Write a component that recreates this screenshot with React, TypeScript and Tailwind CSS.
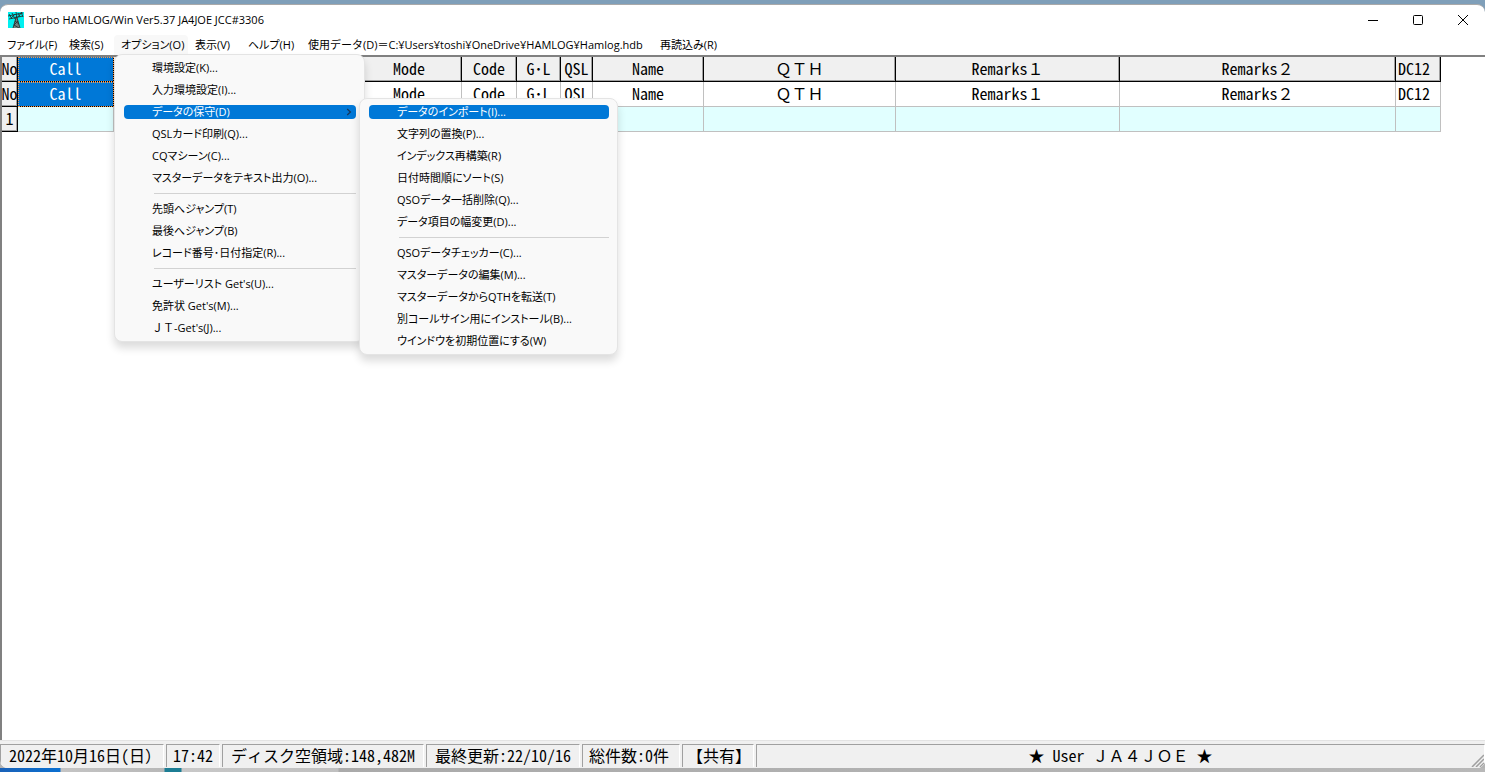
import React from "react";

const columns = [
  { label: "No", width: "w-4" },
  { label: "Call", width: "w-24" },
  { label: "", width: "w-[243px]" },
  { label: "Mode", width: "w-[105px]" },
  { label: "Code", width: "w-[55px]" },
  { label: "G･L", width: "w-11" },
  { label: "QSL", width: "w-8" },
  { label: "Name", width: "w-[111px]" },
  { label: "ＱＴＨ", width: "w-48" },
  { label: "Remarks１", width: "w-56" },
  { label: "Remarks２", width: "w-[276px]" },
  { label: "DC12", width: "w-[45px]" },
];

const optionItems = [
  ["環境設定(K)...", "入力環境設定(I)...", "データの保守(D)", "QSLカード印刷(Q)...", "CQマシーン(C)...", "マスターデータをテキスト出力(O)..."],
  ["先頭へジャンプ(T)", "最後へジャンプ(B)", "レコード番号･日付指定(R)..."],
  ["ユーザーリスト Get's(U)...", "免許状 Get's(M)...", "ＪＴ-Get's(J)..."],
];

const dataItems = [
  ["データのインポート(I)...", "文字列の置換(P)...", "インデックス再構築(R)", "日付時間順にソート(S)", "QSOデータ一括削除(Q)...", "データ項目の幅変更(D)..."],
  ["QSOデータチェッカー(C)...", "マスターデータの編集(M)...", "マスターデータからQTHを転送(T)", "別コールサイン用にインストール(B)...", "ウインドウを初期位置にする(W)"],
];

function Menu({ groups, active, arrow }: { groups: string[][]; active: string; arrow?: boolean }) {
  return (
    <div
      role="menu"
      className="rounded-lg border border-[#e4e4e4] bg-[#f9f9f9] py-[2px] pr-2 pl-[9px] shadow-[0_6px_8px_rgba(0,0,0,0.14)]"
    >
      {groups.map((items, g) => (
        <div key={g}>
          {g > 0 && <div className="my-1 ml-[30px] h-px bg-[#d2d2d2]" />}
          {items.map((item) => (
            <button
              key={item}
              role="menuitem"
              className={
                "flex h-[22px] w-full items-center text-left whitespace-nowrap " +
                (item.startsWith("Ｊ") ? "[font-feature-settings:normal]" : "[font-feature-settings:'palt']")
              }
            >
              <span
                className={
                  item === active
                    ? "flex h-[14px] w-full items-center justify-between rounded bg-[#0078d7] pr-1 pl-7 text-white"
                    : "flex w-full items-center pl-7"
                }
              >
                {item}
                {item === active && arrow && (
                  <svg width="6" height="8" viewBox="0 0 6 8" fill="none" stroke="#17375c" strokeWidth="1.3">
                    <path d="M1.2 1 4.4 4 1.2 7" />
                  </svg>
                )}
              </span>
            </button>
          ))}
        </div>
      ))}
    </div>
  );
}

function TowerIcon() {
  return (
    <svg width="16" height="16" viewBox="0 0 16 16" aria-hidden="true">
      <rect width="16" height="16" fill="#00f0f0" />
      <path d="M7.5 6h2L12 16H5z" fill="#6f7f7f" />
      <g stroke="#243434" strokeWidth=".9" fill="none">
        <path d="M8.5 4 5 16M8.5 4l3.5 12M7 9l4 3M10 9l-4 4M6 13l5 3" />
        <path d="M0 4 15 1M1 7l14-3M1 2l3 5M4 1l3 6M8 0l1 6M10 1l2 4M13 0l2 5M3 6l4-4M10 5l4-5" />
      </g>
    </svg>
  );
}

const statusCell = "flex items-center border-t border-l border-[#a0a0a0] border-r border-r-white pb-[2px] whitespace-pre";
const grid = "font-['Noto_Sans_Mono_CJK_JP','Noto_Sans_CJK_JP',monospace] font-light text-base";
const windowButton = "flex h-full w-[45px] items-center justify-center";
const navButton = "h-full pl-[7px] text-left";

export default function App() {
  return (
    <div className="flex h-screen flex-col overflow-hidden bg-[linear-gradient(#7f9fb9_50%,#b4b4b4_50%)] pt-1 font-['Open_Sans','Noto_Sans_CJK_JP',sans-serif] text-[11px] text-black">
      <main className="flex min-h-0 flex-1 flex-col overflow-hidden rounded-lg border-t border-[#a9a9a9] bg-white">
        <header className="flex h-[30px] shrink-0 items-center pl-2">
          <TowerIcon />
          <h1 className="ml-[5px] flex-1 whitespace-nowrap">Turbo HAMLOG/Win Ver5.37 JA4JOE JCC#3306</h1>
          <button aria-label="最小化" className={windowButton}>
            <svg width="10" height="10" stroke="black"><path d="M0 5.5h10" /></svg>
          </button>
          <button aria-label="最大化" className={windowButton}>
            <svg width="10" height="10" stroke="black" fill="none"><rect x=".5" y=".5" width="9" height="9" rx="1" /></svg>
          </button>
          <button aria-label="閉じる" className={windowButton}>
            <svg width="10" height="10" stroke="black"><path d="M0 0l10 10M10 0 0 10" /></svg>
          </button>
        </header>
        <nav className="relative z-10 flex h-5 shrink-0 items-center whitespace-nowrap [font-feature-settings:'palt']">
          <button className={`${navButton} w-[62px]`}>ファイル(F)</button>
          <button className={`${navButton} w-[52px]`}>検索(S)</button>
          <div className="relative h-full">
            <button className={`${navButton} w-[74px] rounded-t bg-[#f8f8f8]`}>オプション(O)</button>
            <div className="absolute top-[19px] left-0 w-[251px]">
              <Menu groups={optionItems} active="データの保守(D)" arrow />
              <div className="absolute top-11 left-[245px] w-[259px]">
                <Menu groups={dataItems} active="データのインポート(I)..." />
              </div>
            </div>
          </div>
          <button className={`${navButton} w-[53px]`}>表示(V)</button>
          <button className={`${navButton} w-[60px]`}>ヘルプ(H)</button>
          <button className={`${navButton} w-[352px] [font-feature-settings:normal]`}>使用データ(D)＝C:¥Users¥toshi¥OneDrive¥HAMLOG¥Hamlog.hdb</button>
          <button className={`${navButton} w-[76px]`}>再読込み(R)</button>
        </nav>
        <section className="min-h-0 flex-1 overflow-hidden border-t-2 border-l-2 border-t-[#808080] border-l-[#808080] bg-white">
          <table className={`w-0 table-fixed border-separate border-spacing-0 leading-[22px] ${grid}`}>
            <colgroup>
              {columns.map((c, i) => <col key={i} className={c.width} />)}
            </colgroup>
            <tbody>
              {[0, 1].map((row) => (
                <tr key={row} className="h-[25px]">
                  {columns.map((c, i) => (
                    <th
                      key={i}
                      className={
                        "h-[25px] overflow-hidden p-0 pb-[2px] font-light whitespace-nowrap " +
                        (c.label === "DC12" ? "pl-[2px] text-left " : "") +
                        (i === 1
                          ? "border-r border-b border-black bg-[#0078d7] text-white outline-1 -outline-offset-1 outline-dotted outline-[#ff9a4a]"
                          : row === 0 || i === 0
                            ? "border-r border-b border-black bg-[#f0f0f0] shadow-[inset_-1px_-1px_0_#a0a0a0]"
                            : "border-r border-b border-[#c0c0c0]")
                      }
                    >
                      {i === 0 ? <span className="-mx-2 inline-block">{c.label}</span> : c.label}
                    </th>
                  ))}
                </tr>
              ))}
              <tr className="h-[25px]">
                {columns.map((c, i) => (
                  <td
                    key={i}
                    className={
                      "h-[25px] p-0 pb-[2px] text-center " +
                      (i === 0
                        ? "border-r border-b border-black bg-[#f0f0f0] shadow-[inset_-1px_-1px_0_#a0a0a0]"
                        : "border-r border-b border-[#c0c0c0] bg-[#e1ffff]")
                    }
                  >
                    {i === 0 ? "1" : ""}
                  </td>
                ))}
              </tr>
            </tbody>
          </table>
        </section>
        <footer className={`flex h-7 shrink-0 gap-[2px] border-t border-[#e3e3e3] bg-[#f0f0f0] pt-[3px] pb-px ${grid}`}>
          <div className={`${statusCell} w-[164px] pl-2`}>2022年10月16日(日）</div>
          <div className={`${statusCell} w-[54px] pl-1.5`}>17:42</div>
          <div className={`${statusCell} w-[202px] pl-2`}>ディスク空領域:148,482M</div>
          <div className={`${statusCell} w-[154px] pl-2`}>最終更新:22/10/16</div>
          <div className={`${statusCell} w-[98px] pl-1.5`}>総件数:0件</div>
          <div className={`${statusCell} w-[72px] pl-1`}>【共有】</div>
          <div className={`${statusCell} relative flex-1 justify-center`}>
            ★ User ＪＡ４ＪＯＥ ★
            <svg className="absolute right-0 bottom-0" width="13" height="13" stroke="#a0a0a0" strokeWidth="1.5">
              <path d="M1 13 13 1M5 13l8-8M9 13l4-4" />
            </svg>
          </div>
        </footer>
      </main>
      <div className="h-1 shrink-0 bg-[linear-gradient(90deg,#1a62b8_0,#0a6fd0_60px,#c4c4c4_61px,#b8b8b8_164px,#1c7d94_165px,#1c7d94_181px,#c8c8c8_182px,#c0c0c0_338px,#aaaaaa_339px,#b8b8b8_100%)]" />
    </div>
  );
}
